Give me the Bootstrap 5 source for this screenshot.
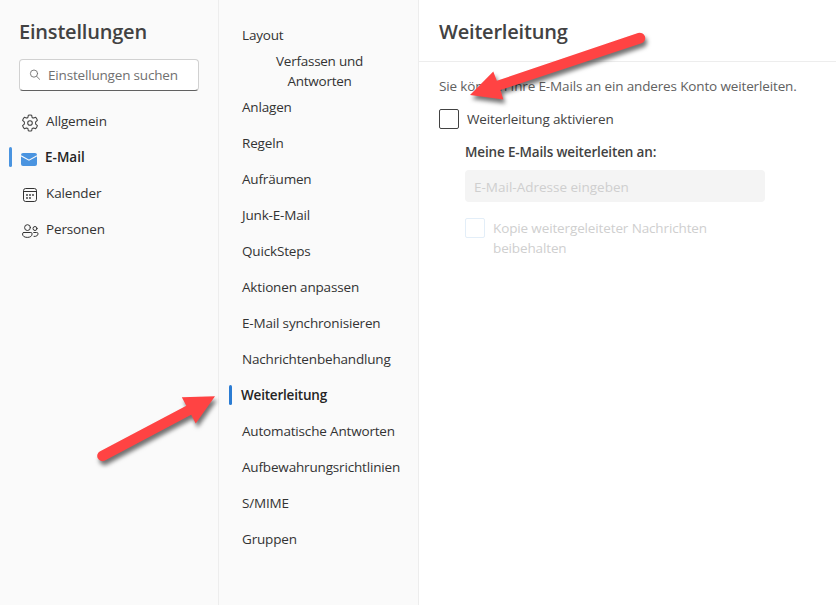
<!DOCTYPE html>
<html lang="de">
<head>
<meta charset="utf-8">
<meta name="viewport" content="width=device-width, initial-scale=1">
<title>Einstellungen</title>
<link href="https://cdn.jsdelivr.net/npm/bootstrap@5.3.0/dist/css/bootstrap.min.css" rel="stylesheet">
<style>
  body { font: 13.5px/20px "Open Sans", "Noto Sans", sans-serif; color: #242424; letter-spacing: -.14px; }
  .settings { height: 605px; }
  .pane { background: #fafafa; border-right: 1px solid #ededed; }
  .pane-main { width: 219px; padding: 18px 19px 0 9px; }
  .pane-sub { width: 200px; padding: 17px 0 0 10px; letter-spacing: -.17px; }
  .pane-title { font-size: 20px; line-height: 28px; font-weight: 600; color: #424242; letter-spacing: -.2px; }
  .pane-main .pane-title, .search { margin-left: 10px; }
  .search { height: 32px; margin-top: 13px; margin-bottom: 12px; border: 1px solid #d1d1d1; border-bottom-color: #616161; color: #707070; padding-left: 9px; gap: 7px; letter-spacing: -.18px; }
  .entry { height: 36px; color: #333; }
  .marker { width: 3px; height: 20px; flex: none; border-radius: 2px; }
  .current .marker { background: #2b7cd3; }
  .pane-main .current .marker { background: #4a94e0; }
  .pane-main .icon { margin: 3px 7px 0 9px; }
  .current { font-weight: 600; color: #242424; letter-spacing: -.2px; }
  .pane-main .current { letter-spacing: 0; }
  .current .entry-label { margin-left: -1px; }
  .pane-sub .entry-label { padding-left: 10px; }
  .pane-sub .wrapped .entry-label { padding: 0; flex: 1; margin: 0 20px 0 9px; text-align: center; white-space: nowrap; letter-spacing: -.26px; }
  .content-head { height: 62px; border-bottom: 1px solid #ededed; padding: 18px 0 0 20px; }
  .content-body { padding: 14px 20px; color: #616161; }
  .box { width: 20px; height: 20px; border: 1px solid #424242; border-radius: 2px; flex: none; }
  .option { margin-top: 13px; color: #424242; }
  .details { padding-left: 26px; width: 326px; margin-top: 13px; }
  .details-label { color: #424242; font-weight: 600; letter-spacing: -.15px; }
  .address { height: 32px; background: #f4f4f4; color: #cfcfcf; padding-left: 9px; margin-top: 8px; padding-top: 2px; letter-spacing: 0; }
  .box.off { border-color: #e3eef8; }
  .copy-option { margin-top: 16px; color: #cfcfcf; letter-spacing: -.13px; }
  .arrows { left: 0; top: 0; pointer-events: none; }
  .arrows g { filter: drop-shadow(2px 4px 2px rgba(0,0,0,.55)); }
</style>
</head>
<body class="bg-white overflow-hidden">
<div class="settings d-flex position-relative">
  <nav class="pane pane-main flex-shrink-0">
    <h1 class="pane-title mb-0">Einstellungen</h1>
    <div class="search d-flex align-items-center bg-white rounded-1">
      <svg width="12" height="12" viewBox="0 0 12 12" fill="none" stroke="#707070" stroke-width=".9" stroke-linecap="round"><circle cx="5" cy="4.6" r="3.6"/><path d="M7.6 7.3 10.6 10.3"/></svg>
      <span>Einstellungen suchen</span>
    </div>
    <div class="entry d-flex align-items-center">
      <span class="marker"></span>
      <svg class="icon" width="18" height="18" viewBox="0 0 18 18" fill="none" stroke="#424242" stroke-width="1.05" stroke-linejoin="round"><path d="M7.3 1.3Q9 .8 10.7 1.3L11.1 3.5Q11.8 4 12.6 4.1L14.7 3.3Q15.9 4.6 16.4 6.3L14.7 7.8Q14.4 9 14.7 10.2L16.4 11.7Q15.9 13.4 14.7 14.7L12.6 13.9Q11.8 14 11.1 14.5L10.7 16.7Q9 17.2 7.3 16.7L6.9 14.5Q6.2 14 5.4 13.9L3.3 14.7Q2.1 13.4 1.6 11.7L3.3 10.2Q3.6 9 3.3 7.8L1.6 6.3Q2.1 4.6 3.3 3.3L5.4 4.1Q6.2 4 6.9 3.5Z"/><circle cx="9" cy="9" r="2.3"/></svg>
      <span class="entry-label">Allgemein</span>
    </div>
    <div class="entry current d-flex align-items-center">
      <span class="marker"></span>
      <svg class="icon" width="18" height="18" viewBox="0 0 18 18"><rect y="3" width="16" height="13" rx="2" fill="#4a94e0"/><path d="m0 5.8 8 4.4 8-4.4" fill="none" stroke="#fafafa" stroke-width="1.1"/></svg>
      <span class="entry-label">E-Mail</span>
    </div>
    <div class="entry d-flex align-items-center">
      <span class="marker"></span>
      <svg class="icon" width="18" height="18" viewBox="0 0 18 18" fill="none" stroke="#333"><rect x="2.5" y="2.5" width="13" height="13" rx="2.2"/><path d="M2.5 5.5h13"/><g fill="#333" stroke="none"><circle cx="6" cy="9" r=".9"/><circle cx="9" cy="9" r=".9"/><circle cx="12" cy="9" r=".9"/><circle cx="6" cy="12" r=".9"/><circle cx="9" cy="12" r=".9"/></g></svg>
      <span class="entry-label">Kalender</span>
    </div>
    <div class="entry d-flex align-items-center">
      <span class="marker"></span>
      <svg class="icon" width="18" height="18" viewBox="0 0 18 18" fill="none" stroke="#333" stroke-linecap="round" stroke-linejoin="round"><circle cx="6.5" cy="5.6" r="2.9"/><circle cx="14" cy="6.5" r="2"/><path d="M2.8 10.5h7q1.3 0 1.3 1.3c0 2.3-1.8 3.6-4.8 3.6s-4.8-1.3-4.8-3.6q0-1.3 1.3-1.3ZM12.7 10.5h3q1.3 0 1.3 1.2c0 1.8-1.6 3-4 2.7"/></svg>
      <span class="entry-label">Personen</span>
    </div>
  </nav>
  <nav class="pane pane-sub flex-shrink-0">
    <div class="entry d-flex align-items-center"><span class="marker"></span><span class="entry-label">Layout</span></div>
    <div class="entry wrapped d-flex align-items-center"><span class="marker"></span><span class="entry-label">Verfassen und<br>Antworten</span></div>
    <div class="entry d-flex align-items-center"><span class="marker"></span><span class="entry-label">Anlagen</span></div>
    <div class="entry d-flex align-items-center"><span class="marker"></span><span class="entry-label">Regeln</span></div>
    <div class="entry d-flex align-items-center"><span class="marker"></span><span class="entry-label">Aufräumen</span></div>
    <div class="entry d-flex align-items-center"><span class="marker"></span><span class="entry-label">Junk-E-Mail</span></div>
    <div class="entry d-flex align-items-center"><span class="marker"></span><span class="entry-label">QuickSteps</span></div>
    <div class="entry d-flex align-items-center"><span class="marker"></span><span class="entry-label">Aktionen anpassen</span></div>
    <div class="entry d-flex align-items-center"><span class="marker"></span><span class="entry-label">E-Mail synchronisieren</span></div>
    <div class="entry d-flex align-items-center"><span class="marker"></span><span class="entry-label">Nachrichtenbehandlung</span></div>
    <div class="entry current d-flex align-items-center"><span class="marker"></span><span class="entry-label">Weiterleitung</span></div>
    <div class="entry d-flex align-items-center"><span class="marker"></span><span class="entry-label">Automatische Antworten</span></div>
    <div class="entry d-flex align-items-center"><span class="marker"></span><span class="entry-label">Aufbewahrungsrichtlinien</span></div>
    <div class="entry d-flex align-items-center"><span class="marker"></span><span class="entry-label">S/MIME</span></div>
    <div class="entry d-flex align-items-center"><span class="marker"></span><span class="entry-label">Gruppen</span></div>
  </nav>
  <main class="flex-grow-1">
    <div class="content-head"><h2 class="pane-title mb-0">Weiterleitung</h2></div>
    <div class="content-body">
      <p class="mb-0 text-nowrap">Sie können Ihre E-Mails an ein anderes Konto weiterleiten.</p>
      <div class="option d-flex align-items-center gap-2"><span class="box"></span><span>Weiterleitung aktivieren</span></div>
      <div class="details">
        <div class="details-label">Meine E-Mails weiterleiten an:</div>
        <div class="address d-flex align-items-center rounded-1">E-Mail-Adresse eingeben</div>
        <div class="copy-option d-flex gap-2"><span class="box off"></span><span>Kopie weitergeleiteter Nachrichten<br>beibehalten</span></div>
      </div>
    </div>
  </main>
  <svg class="arrows position-absolute" width="836" height="605" viewBox="0 0 836 605" fill="#ff4343">
    <g><path d="M470 95 493.3 71.5 496.8 80.8 638 33A5.4 5.4 0 0 1 641.6 43.2L500.5 90 503.3 99.5Z"/></g>
    <g><path d="M215 396.2 195.7 423.5 191.2 414.8 104.5 460.7A5.2 5.2 0 0 1 99.7 451.5L186.3 405.7 181.8 397.2Z"/></g>
  </svg>
</div>
<script src="https://cdn.jsdelivr.net/npm/bootstrap@5.3.0/dist/js/bootstrap.bundle.min.js"></script>
</body>
</html>
